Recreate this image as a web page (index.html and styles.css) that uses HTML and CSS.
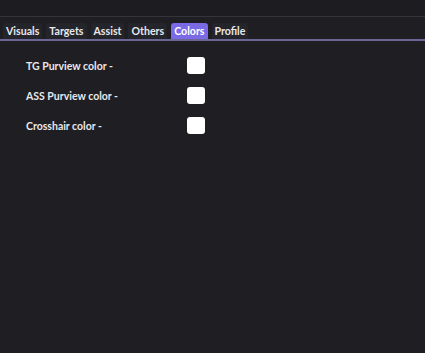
FILE: index.html
```html
<!DOCTYPE html>
<html lang="en">
<head>
  <meta charset="UTF-8" />
  <title>Colors</title>
  <link rel="stylesheet" href="styles.css">
</head>
<body>
  <div class="topbar"></div>
  <div class="tabs">
    <div class="tab">Visuals</div>
    <div class="tab">Targets</div>
    <div class="tab">Assist</div>
    <div class="tab">Others</div>
    <div class="tab active">Colors</div>
    <div class="tab">Profile</div>
  </div>
  <div class="panel">
    <div class="row">
      <span class="label">TG Purview color -</span>
      <div class="swatch"></div>
    </div>
    <div class="row">
      <span class="label">ASS Purview color -</span>
      <div class="swatch"></div>
    </div>
    <div class="row">
      <span class="label">Crosshair color -</span>
      <div class="swatch"></div>
    </div>
  </div>
</body>
</html>
```
FILE: styles.css
```css
* {
  box-sizing: border-box;
  font-family: Lato, "Open Sans", sans-serif;
}

body {
  margin: 0;
  height: 353px;
  background: #1e1e23;
  color: #e8e8ec;
  overflow: hidden;
}

.topbar {
  height: 17px;
  border-bottom: 1px solid #34343c;
  background: #1c1c21;
}

.tabs {
  display: flex;
  gap: 4px;
  padding: 6px 0 0 3px;
  border-bottom: 2px solid #6a6797;
}

.tab {
  height: 16px;
  padding: 0 3px;
  font-size: 10.6px;
  font-weight: 700;
  line-height: 17px;
  background: #24242b;
  border-radius: 3px 3px 0 0;
}

.tab.active {
  background: #7b6ae6;
  color: #fff;
}

.panel {
  display: flex;
  flex-direction: column;
  gap: 13px;
  padding: 16px 0 0 26px;
}

.row {
  display: flex;
  align-items: center;
  width: 179px;
  height: 17px;
  justify-content: space-between;
}

.label {
  font-size: 10.5px;
  font-weight: 700;
}

.swatch {
  width: 18px;
  height: 17px;
  background: #fff;
  border-radius: 3px;
}
```
